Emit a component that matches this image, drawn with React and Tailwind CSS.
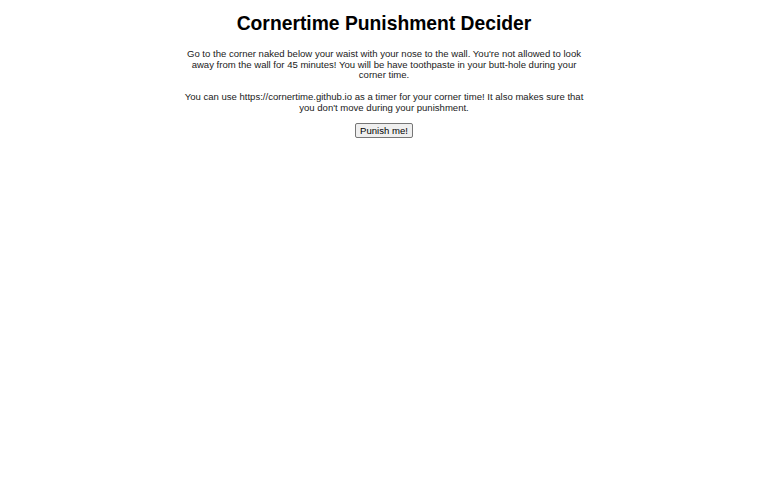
export default function App() {
  return (
    <div className="min-h-[480px] bg-white text-black" style={{ fontFamily: '"Liberation Sans", Arial, sans-serif' }}>
      <div className="mx-auto w-[400px] text-center pt-[12px]">
        <h1 className="text-[19.3px] leading-[23px] font-bold mb-[14px]">Cornertime Punishment Decider</h1>
        <p className="text-[9.55px] leading-[10.7px] text-[#1a1a1a]">
          Go to the corner naked below your waist with your nose to the wall. You're not allowed to look away from the wall for 45 minutes! You will be have toothpaste in your butt-hole during your corner time.
        </p>
        <p className="text-[9.55px] leading-[10.7px] text-[#1a1a1a] mt-[11px]">
          You can use https://cornertime.github.io as a timer for your corner time! It also makes sure that you don't move during your punishment.
        </p>
        <button className="mt-[9px] text-[9.55px] leading-[11px] px-[4px] py-[1px] border border-[#767676] bg-[#efefef] rounded-[2px]">
          Punish me!
        </button>
      </div>
    </div>
  )
}
